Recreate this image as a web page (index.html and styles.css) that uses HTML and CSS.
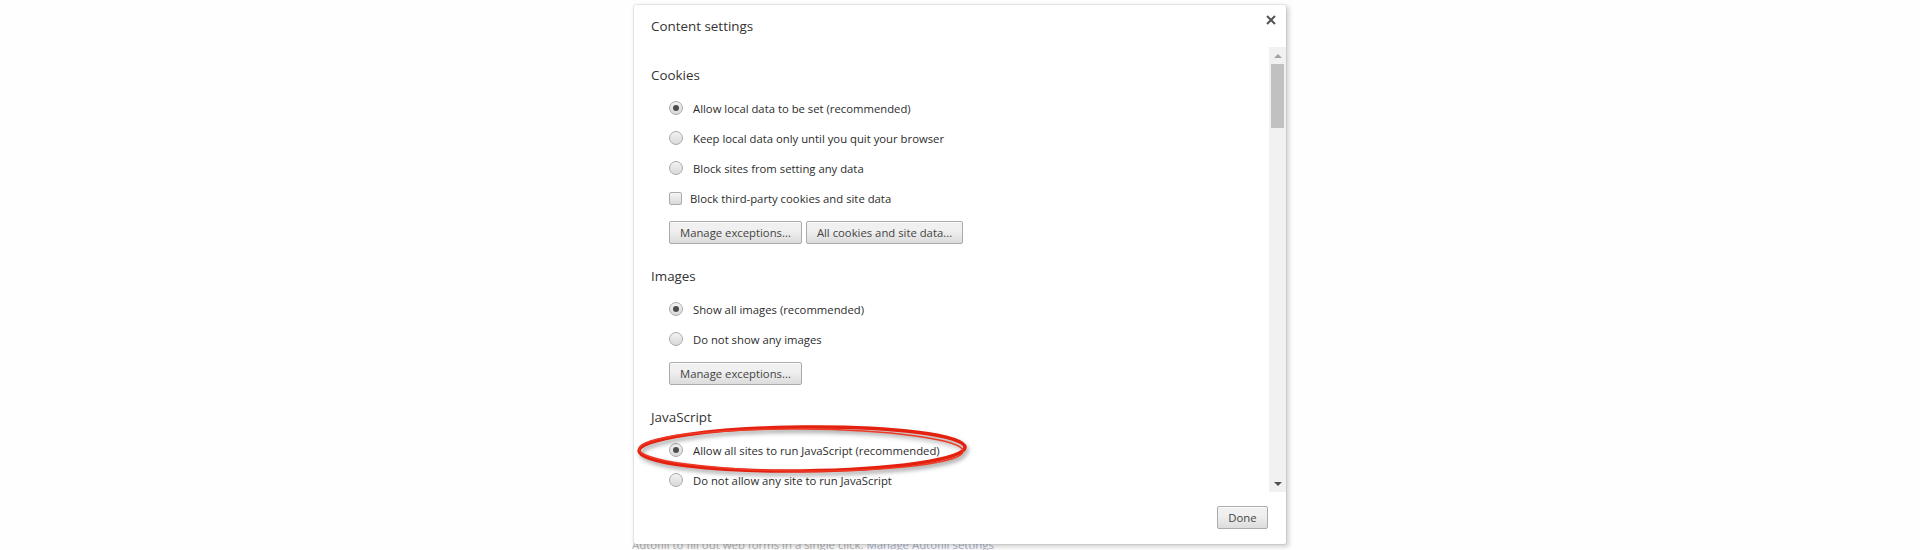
FILE: index.html
```html
<!DOCTYPE html>
<html lang="en">
<head>
    <meta charset="UTF-8">
    <title>Settings - Content settings</title>
    <link rel="stylesheet" href="styles.css">
</head>
<body>
    <div class="page">
        <p class="page-text">Autofill to fill out web forms in a single click. <a href="#">Manage Autofill settings</a></p>
    </div>

    <div class="overlay">
        <div class="dialog">
            <div class="dialog-header">
                <h1>Content settings</h1>
                <button class="close-button" aria-label="Close">
                    <svg width="10" height="10" viewBox="0 0 10 10">
                        <path d="M1 1 L9 9 M9 1 L1 9" stroke="#555" stroke-width="2" fill="none"/>
                    </svg>
                </button>
            </div>

            <div class="dialog-body">
                <div class="content">
                    <section>
                        <h3>Cookies</h3>
                        <label class="option"><span class="radio checked"></span>Allow local data to be set (recommended)</label>
                        <label class="option"><span class="radio"></span>Keep local data only until you quit your browser</label>
                        <label class="option"><span class="radio"></span>Block sites from setting any data</label>
                        <label class="option"><span class="checkbox"></span>Block third-party cookies and site data</label>
                        <div class="buttons">
                            <button class="btn">Manage exceptions...</button>
                            <button class="btn">All cookies and site data...</button>
                        </div>
                    </section>

                    <section>
                        <h3>Images</h3>
                        <label class="option"><span class="radio checked"></span>Show all images (recommended)</label>
                        <label class="option"><span class="radio"></span>Do not show any images</label>
                        <div class="buttons">
                            <button class="btn">Manage exceptions...</button>
                        </div>
                    </section>

                    <section>
                        <h3>JavaScript</h3>
                        <label class="option"><span class="radio checked"></span>Allow all sites to run JavaScript (recommended)</label>
                        <label class="option"><span class="radio"></span>Do not allow any site to run JavaScript</label>
                    </section>
                </div>

                <div class="scrollbar">
                    <span class="arrow arrow-up"></span>
                    <span class="thumb"></span>
                    <span class="track"></span>
                    <span class="arrow arrow-down"></span>
                </div>
            </div>

            <div class="dialog-footer">
                <button class="btn done">Done</button>
            </div>

            <!-- red marker drawn over the screenshot -->
            <svg class="highlight" width="340" height="60" viewBox="0 0 340 60">
                <ellipse cx="168" cy="28" rx="163" ry="22" fill="none" stroke="#e4200f" stroke-width="3.5" transform="rotate(-0.6 168 28)"/>
                <ellipse cx="167" cy="29" rx="162" ry="21" fill="none" stroke="#ee3a26" stroke-width="1.5" transform="rotate(0.4 167 29)"/>
            </svg>
        </div>
    </div>
</body>
</html>
```

FILE: styles.css
```css
html, body {
    margin: 0;
    height: 550px;
    overflow: hidden;
}

body {
    font-family: "Segoe UI", "Open Sans", sans-serif;
    font-size: 11.3px;
    color: #2c2c2c;
    background: #fefefe;
    position: relative;
}

.page {
    padding: 537px 0 0 632px;
}

.page-text {
    margin: 0;
    font-size: 11.4px;
    color: #b4b4b4;
}

.page-text a {
    color: #aab4cc;
    text-decoration: none;
}

.overlay {
    position: absolute;
    top: 0;
    left: 0;
    right: 0;
    bottom: 0;
    display: flex;
    justify-content: center;
    align-items: flex-start;
    padding-top: 5px;
}

.dialog {
    position: relative;
    width: 652px;
    height: 539px;
    background: white;
    display: flex;
    flex-direction: column;
    border-radius: 2px;
    box-shadow: 0 0 0 1px rgba(0,0,0,0.06), 2px 2px 5px 1px rgba(0,0,0,0.18);
}

.dialog-header {
    height: 42px;
    display: flex;
    align-items: flex-start;
    padding-left: 17px;
    flex-shrink: 0;
}

.dialog-header h1 {
    margin: 0;
    padding-top: 11px;
    font-size: 13.4px;
    font-weight: normal;
    line-height: 20px;
    color: #333;
}

.close-button {
    margin: 9px 9px 0 auto;
    padding: 0;
    width: 12px;
    height: 12px;
    border: none;
    background: none;
    display: flex;
    align-items: center;
    justify-content: center;
}

.dialog-body {
    flex: 1;
    display: flex;
    overflow: hidden;
}

.content {
    flex: 1;
    padding: 18px 0 0 17px;
    overflow: hidden;
}

.content section + section {
    margin-top: 22px;
}

.content h3 {
    margin: 0 0 8px;
    font-size: 13.4px;
    font-weight: normal;
    line-height: 20px;
    color: #333;
}

.option {
    display: flex;
    align-items: center;
    height: 30px;
    padding-left: 18px;
}

.radio {
    width: 14px;
    height: 14px;
    border: 1px solid #ababab;
    border-radius: 50%;
    background: linear-gradient(#f2f2f2, #d9d9d9);
    margin-right: 10px;
    box-sizing: border-box;
    display: flex;
    align-items: center;
    justify-content: center;
}

.radio.checked::after {
    content: "";
    width: 6px;
    height: 6px;
    border-radius: 50%;
    background: #4d4d4d;
}

.checkbox {
    width: 13px;
    height: 13px;
    border: 1px solid #ababab;
    border-radius: 2px;
    background: linear-gradient(#f4f4f4, #dadada);
    margin-right: 8px;
    box-sizing: border-box;
}

.buttons {
    display: flex;
    gap: 4px;
    margin-top: 8px;
    padding-left: 18px;
}

.btn {
    height: 23px;
    padding: 0 10px;
    font-family: inherit;
    font-size: 11.3px;
    color: #444;
    border: 1px solid #ababab;
    border-radius: 2px;
    background: linear-gradient(#f0f0f0, #f0f0f0 38%, #dcdcdc);
    box-shadow: inset 0 1px 0 rgba(255,255,255,0.7);
}

.scrollbar {
    width: 17px;
    background: #f1f1f1;
    display: flex;
    flex-direction: column;
}

.arrow {
    height: 17px;
    display: flex;
    align-items: center;
    justify-content: center;
}

.arrow::after {
    content: "";
    border-left: 4px solid transparent;
    border-right: 4px solid transparent;
}

.arrow-up::after {
    border-bottom: 4px solid #a3a3a3;
}

.arrow-down::after {
    border-top: 4px solid #505050;
}

.thumb {
    height: 64px;
    margin: 0 2px;
    background: #c1c1c1;
}

.track {
    flex: 1;
}

.dialog-footer {
    height: 52px;
    display: flex;
    justify-content: flex-end;
    align-items: flex-start;
    padding: 14px 18px 0 0;
    box-sizing: border-box;
}

.done {
    width: 51px;
    padding: 0;
}

.highlight {
    position: absolute;
    left: 0;
    top: 416px;
    filter: drop-shadow(2px 3px 2px rgba(0,0,0,0.35));
}
```
